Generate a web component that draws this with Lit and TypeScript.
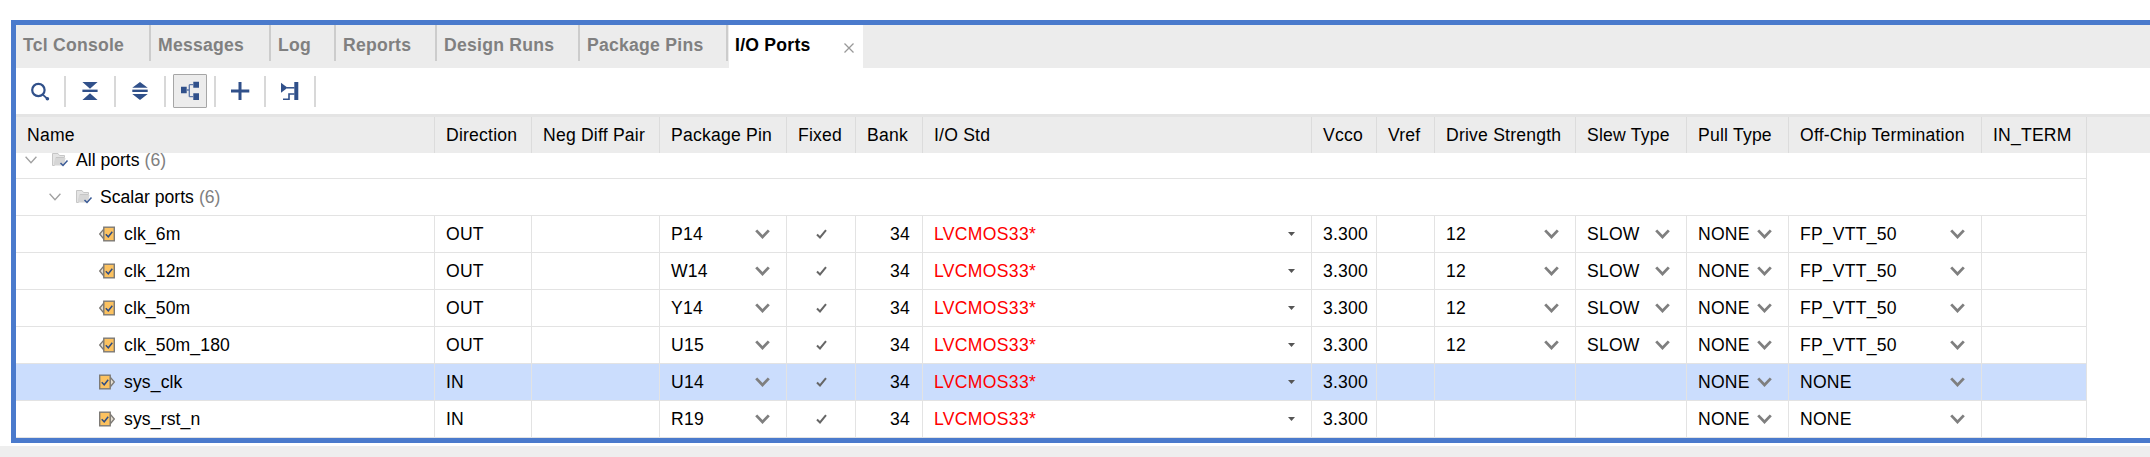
import { LitElement, html, css, svg } from "lit";
import { customElement } from "lit/decorators.js";

const chev = html`<svg class="chev" width="15" height="10" viewBox="0 0 15 10"><path d="M1.2 1.4 L7.5 8 L13.8 1.4" fill="none" stroke="#7f7f7f" stroke-width="2.8"/></svg>`;
const check = html`<svg width="11" height="10" viewBox="0 0 11 10"><path d="M1 5.5 L4 8.5 L10 1.2" fill="none" stroke="#666" stroke-width="2"/></svg>`;
const tri = html`<svg width="7" height="4" viewBox="0 0 7 4"><path d="M0 0 H7 L3.5 4 Z" fill="#555"/></svg>`;
const twisty = html`<svg class="twisty" width="12" height="8" viewBox="0 0 12 8"><path d="M0.6 0.8 L6 6.8 L11.4 0.8" fill="none" stroke="#a0a0a0" stroke-width="1.3"/></svg>`;
const folder = html`<svg class="folder" width="17" height="14" viewBox="0 0 17 14">
  <path d="M0.5 0.5 H6 L7.5 2.5 H12.5 V4.5 H4 L2.5 12.5 H0.5 Z" fill="#e4e4e4" stroke="#c6c6c6"/>
  <path d="M3 5 H13.5 L12 12.5 H2 Z" fill="#d6d6d6"/>
  <path d="M8.5 10 L11 12.5 L15.5 7.5" fill="none" stroke="#3a5a96" stroke-width="1.5"/>
</svg>`;
const outIcon = html`<svg class="port" width="16" height="16" viewBox="0 0 16 16">
  <path d="M5 2.8 L0.7 8 L5 13.2 Z" fill="#e6dfd2" stroke="#7d7a76" stroke-width="1.3"/>
  <rect x="4.8" y="1.2" width="10.5" height="13.6" fill="#fcc260" stroke="#7d7a76" stroke-width="1.4"/>
  <path d="M6.8 8.3 L9.3 10.8 L13.3 5.8" fill="none" stroke="#2f4d83" stroke-width="1.5"/>
</svg>`;
const inIcon = html`<svg class="port" width="16" height="16" viewBox="0 0 16 16">
  <path d="M11 2.8 L15.3 8 L11 13.2 Z" fill="#e6dfd2" stroke="#7d7a76" stroke-width="1.3"/>
  <rect x="0.7" y="1.2" width="10.5" height="13.6" fill="#fcc260" stroke="#7d7a76" stroke-width="1.4"/>
  <path d="M2.7 8.3 L5.2 10.8 L9.2 5.8" fill="none" stroke="#2f4d83" stroke-width="1.5"/>
</svg>`;

const tb = (inner: unknown) => html`<svg width="20" height="20" viewBox="0 0 20 20">${inner}</svg>`;
const C = "#30508a";
const icons = [
  tb(svg`<circle cx="8.4" cy="9" r="6.2" fill="none" stroke="${C}" stroke-width="2.2"/><path d="M13 13.8 L18 18.4" stroke="${C}" stroke-width="1.8"/><circle cx="17.4" cy="17.8" r="1.8" fill="${C}"/>`),
  tb(svg`<path d="M2.4 1 H17.6 L10 7.7 Z M2.4 19 H17.6 L10 12.3 Z" fill="${C}"/><path d="M2.4 9.8 H17.6" stroke="${C}" stroke-width="2.4"/>`),
  tb(svg`<path d="M10 1 L17.7 6.7 H2.3 Z M10 19 L17.7 13 H2.3 Z" fill="${C}"/><path d="M2.3 9.8 H17.7" stroke="${C}" stroke-width="2.4"/>`),
  tb(svg`<path d="M1 5.7 H6.7 V12.3 H1 Z M13.3 0.7 H19 V6.7 H13.3 Z M13.3 12.3 H19 V19 H13.3 Z" fill="${C}"/><path d="M6.7 9 H9.3 M9.3 3.7 V15.7 M9.3 3.7 H13.3 M9.3 15.7 H13.3" fill="none" stroke="#5c76a8" stroke-width="1.3"/>`),
  tb(svg`<path d="M10 1 V19 M1 10 H19.3" stroke="${C}" stroke-width="3"/>`),
  tb(svg`<path d="M1 1.7 L7.6 6.7 L1 11.7 Z" fill="${C}"/><path d="M14.3 1 H18.3 V19 H14.3 Z" fill="${C}"/><path d="M7 6.8 H14.5" fill="none" stroke="${C}" stroke-width="1.5"/><path d="M3 18.3 H9 V13 H14.5" fill="none" stroke="${C}" stroke-width="1.6"/>`),
];

const tabs: [string, number][] = [
  ["Tcl Console", 135], ["Messages", 120], ["Log", 65], ["Reports", 101], ["Design Runs", 143], ["Package Pins", 148],
];
const headers = ["Name", "Direction", "Neg Diff Pair", "Package Pin", "Fixed", "Bank", "I/O Std", "Vcco", "Vref", "Drive Strength", "Slew Type", "Pull Type", "Off-Chip Termination", "IN_TERM"];

type Port = { name: string; dir: "OUT" | "IN"; pin: string; sel?: boolean };
const ports: Port[] = [
  { name: "clk_6m", dir: "OUT", pin: "P14" },
  { name: "clk_12m", dir: "OUT", pin: "W14" },
  { name: "clk_50m", dir: "OUT", pin: "Y14" },
  { name: "clk_50m_180", dir: "OUT", pin: "U15" },
  { name: "sys_clk", dir: "IN", pin: "U14", sel: true },
  { name: "sys_rst_n", dir: "IN", pin: "R19" },
];

@customElement("app-root")
export class AppRoot extends LitElement {
  static styles = css`
    :host { display: block; width: 2150px; height: 457px; background: #fff; overflow: hidden;
      font-family: "Liberation Sans", Arial, sans-serif; font-size: 17.6px; color: #000; }
    .page { display: flex; flex-direction: column; height: 457px; padding-top: 20px; box-sizing: border-box; }
    .panel { height: 423px; margin-left: 11px; box-sizing: border-box; display: flex; flex-direction: column;
      border: 5px solid #4a7acc; border-right: none; }
    .foot { margin-top: 3px; flex: 1; background: #eeeeee; }
    .tabs { display: flex; height: 43px; background: #ececec; flex: none; }
    .tab { box-sizing: border-box; height: 36px; padding: 0 0 0 7px; font-weight: bold; color: #808080; letter-spacing: 0.25px;
      border-right: 2px solid #cccccc; line-height: 40px; white-space: nowrap; }
    .tab.active { height: 43px; width: 134px; margin-left: 1px; background: #fff; color: #000; border: none;
      padding-left: 6px; display: flex; justify-content: space-between; align-items: flex-start; }
    .close { margin: 18px 9px 0 0; }
    .toolbar { display: flex; align-items: center; height: 46px; background: #fff; flex: none; }
    .tool { width: 48px; height: 46px; display: flex; align-items: center; justify-content: center; }
    .tool.on span { width: 34px; height: 34px; box-sizing: border-box; background: #ececec; border: 1px solid #a6a6a6;
      border-radius: 1px; display: flex; align-items: center; justify-content: center; }
    .tool span { display: flex; }
    .sep { width: 2px; height: 31px; background: #d8d8d8; }
    .thead { height: 39px; box-sizing: border-box; border-top: 3px solid #e4e4e4; background: #ececec; flex: none; display: flex; }
    .grid { display: grid; width: 2071px; flex: none;
      grid-template-columns: 419px 97px 128px 127px 69px 67px 389px 65px 58px 141px 111px 102px 193px 105px; }
    .th { box-sizing: border-box; padding-left: 11px; line-height: 36px; letter-spacing: 0.2px; border-right: 1px solid #dcdcdc; white-space: nowrap; }
    .body { flex: 1; }
    .tree { width: 2071px; height: 37px; box-sizing: border-box; border-bottom: 1px solid #e3e3e3; border-right: 1px solid #e3e3e3;
      display: flex; align-items: center; line-height: 14px; }
    .tree.root { height: 26px; padding: 0 0 11px 9px; }
    .tree.sub { padding-left: 33px; }
    .twisty { flex: none; margin-right: 15px; }
    .folder { flex: none; margin-right: 7px; }
    .count { color: #808080; margin-left: 5px; }
    .row { height: 37px; }
    .row.sel { background: #cbddfd; }
    .td { box-sizing: border-box; height: 37px; padding: 0 16px 0 11px; letter-spacing: 0.2px; border-right: 1px solid #e3e3e3; border-bottom: 1px solid #e3e3e3;
      display: flex; align-items: center; justify-content: space-between; white-space: nowrap; }
    .name { justify-content: flex-start; padding-left: 83px; letter-spacing: 0.12px; }
    .port { flex: none; margin-right: 9px; }
    .center { justify-content: center; padding: 0; }
    .right { justify-content: flex-end; padding-right: 12px; }
    .red { color: #ff0000; letter-spacing: 0.3px; }
  `;

  private sel(v: string) {
    return html`<div class="td"><span>${v}</span>${chev}</div>`;
  }

  private row(p: Port) {
    const out = p.dir === "OUT";
    return html`<div class="grid row ${p.sel ? "sel" : ""}">
      <div class="td name">${out ? outIcon : inIcon}<span>${p.name}</span></div>
      <div class="td">${p.dir}</div>
      <div class="td"></div>
      ${this.sel(p.pin)}
      <div class="td center">${check}</div>
      <div class="td right">34</div>
      <div class="td"><span class="red">LVCMOS33*</span>${tri}</div>
      <div class="td">3.300</div>
      <div class="td"></div>
      ${out ? this.sel("12") : html`<div class="td"></div>`}
      ${out ? this.sel("SLOW") : html`<div class="td"></div>`}
      ${this.sel("NONE")}
      ${this.sel(out ? "FP_VTT_50" : "NONE")}
      <div class="td"></div>
    </div>`;
  }

  render() {
    return html`<div class="page">
      <div class="panel">
        <div class="tabs">
          ${tabs.map(([t, w]) => html`<div class="tab" style="width:${w}px">${t}</div>`)}
          <div class="tab active"><span>I/O Ports</span>
            <svg class="close" width="10" height="10" viewBox="0 0 10 10"><path d="M0.5 0.5 L9.5 9.5 M9.5 0.5 L0.5 9.5" stroke="#999" stroke-width="1.3"/></svg>
          </div>
        </div>
        <div class="toolbar">
          ${icons.map((ic, i) => html`<div class="tool ${i === 3 ? "on" : ""}"><span>${ic}</span></div><div class="sep"></div>`)}
        </div>
        <div class="thead"><div class="grid">${headers.map((h) => html`<div class="th">${h}</div>`)}</div></div>
        <div class="body">
          <div class="tree root">${twisty}${folder}<span>All ports</span><span class="count">(6)</span></div>
          <div class="tree sub">${twisty}${folder}<span>Scalar ports</span><span class="count">(6)</span></div>
          ${ports.map((p) => this.row(p))}
        </div>
      </div>
      <div class="foot"></div>
    </div>`;
  }
}
